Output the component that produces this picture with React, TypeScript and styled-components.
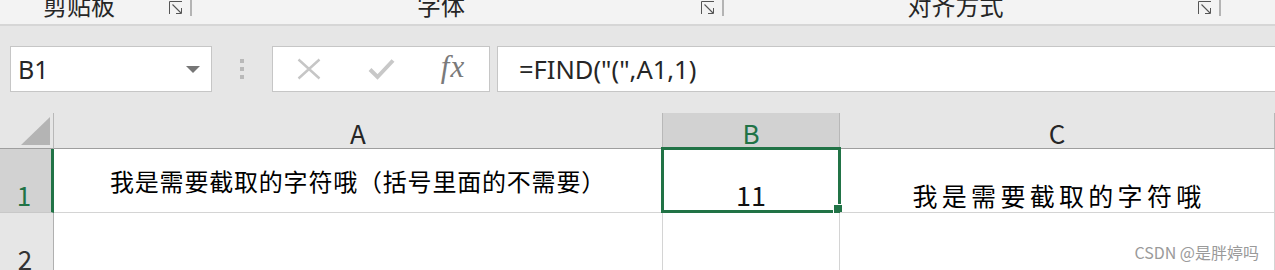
import React from "react";
import styled, { createGlobalStyle } from "styled-components";

const Global = createGlobalStyle`
  html, body { margin: 0; padding: 0; width: 1275px; height: 270px; overflow: hidden; background: #fff; }
  * { box-sizing: border-box; }
`;

const CJK = `"Noto Sans CJK SC", "Noto Sans", sans-serif`;
const UI = `"Noto Sans", "Open Sans", "Noto Sans CJK SC", sans-serif`;
const GREEN = "#217346";

const Page = styled.div`
  position: relative;
  width: 1275px;
  height: 270px;
  overflow: hidden;
  background: #e6e6e6;
`;

/* ---------- Ribbon group labels ---------- */
const Ribbon = styled.div`
  display: flex;
  height: 26px;
  background: #f3f3f3;
  border-bottom: 2px solid #d6d6d6;
  overflow: hidden;
`;

const Group = styled.div<{ $w: number }>`
  display: flex;
  align-items: flex-start;
  flex: none;
  width: ${(p) => p.$w}px;
`;

const GroupLabel = styled.div`
  flex: 1;
  padding-right: 11px;
  margin-top: -7px;
  text-align: center;
  font-family: ${CJK};
  font-size: 24px;
  line-height: 24px;
  color: #262626;
  white-space: nowrap;
`;

const Launcher = styled.svg`
  flex: none;
  width: 14px;
  height: 14px;
  margin-top: 1px;
`;

const GroupSep = styled.div`
  flex: none;
  width: 2px;
  height: 16px;
  margin-left: 7px;
  background: #b4b4b4;
`;

/* ---------- Formula bar ---------- */
const FormulaArea = styled.div`
  display: flex;
  align-items: stretch;
  height: 87px;
  padding: 20px 0 21px 10px;
`;

const NameBox = styled.div`
  display: flex;
  align-items: center;
  flex: none;
  width: 202px;
  padding: 0 11px 0 7px;
  background: #fff;
  border: 1px solid #c6c6c6;
  font-family: ${UI};
  font-size: 25px;
  color: #262626;
`;

const NameText = styled.span`
  flex: 1;
`;

const DropArrow = styled.div`
  width: 0;
  height: 0;
  border-left: 7px solid transparent;
  border-right: 7px solid transparent;
  border-top: 7px solid #767676;
`;

const Dots = styled.div`
  display: flex;
  flex-direction: column;
  justify-content: center;
  gap: 4px;
  flex: none;
  width: 4px;
  margin: 0 28px;
`;

const Dot = styled.div`
  width: 4px;
  height: 4px;
  background: #b9b9b9;
`;

const ButtonBox = styled.div`
  display: flex;
  flex: none;
  width: 218px;
  background: #fff;
  border: 1px solid #c6c6c6;
`;

const IconSlot = styled.div`
  display: flex;
  align-items: center;
  justify-content: center;
  width: 72px;
  flex: none;
`;

const Fx = styled.span`
  font-family: "Liberation Serif", "DejaVu Serif", serif;
  font-style: italic;
  font-size: 31px;
  color: #7a7a7a;
  margin-top: -4px;
  letter-spacing: 1px;
`;

const FormulaInput = styled.div`
  display: flex;
  align-items: center;
  flex: 1;
  margin-left: 7px;
  padding-left: 21px;
  background: #fff;
  border: 1px solid #c6c6c6;
  border-right: none;
  font-family: ${UI};
  font-size: 25.5px;
  color: #262626;
  white-space: nowrap;
`;

/* ---------- Sheet grid ---------- */
const Sheet = styled.div`
  display: grid;
  grid-template-columns: 54px 609px 177px 1fr;
  grid-template-rows: 36px 64px 64px;
  background: #fff;
`;

const Corner = styled.div`
  display: flex;
  justify-content: flex-end;
  align-items: flex-end;
  padding: 0 3px 3px 0;
  background: #e6e6e6;
  border-right: 1px solid #b8b8b8;
  border-bottom: 1px solid #9e9e9e;
`;

const CornerTriangle = styled.div`
  width: 29px;
  height: 28px;
  background: #b4b4b4;
  clip-path: polygon(100% 0, 100% 100%, 0 100%);
`;

const ColHead = styled.div<{ $sel?: boolean }>`
  display: flex;
  align-items: center;
  justify-content: center;
  padding-top: 3px;
  background: ${(p) => (p.$sel ? "#d2d2d2" : "#e6e6e6")};
  border-right: 1px solid #b8b8b8;
  border-bottom: 1px solid ${(p) => (p.$sel ? GREEN : "#9e9e9e")};
  font-family: ${CJK};
  font-size: 26px;
  color: ${(p) => (p.$sel ? GREEN : "#262626")};
`;

const RowHead = styled.div<{ $sel?: boolean }>`
  display: flex;
  align-items: flex-end;
  justify-content: center;
  padding: 0 3px 0 0;
  background: ${(p) => (p.$sel ? "#d2d2d2" : "#e6e6e6")};
  border-right: ${(p) => (p.$sel ? `3px solid ${GREEN}` : "1px solid #b0b0b0")};
  border-bottom: 1px solid #c8c8c8;
  font-family: ${CJK};
  font-size: 26px;
  line-height: 34px;
  color: ${(p) => (p.$sel ? GREEN : "#333")};
`;

const Cell = styled.div<{ $align?: "center" | "end" }>`
  position: relative;
  display: flex;
  justify-content: center;
  align-items: ${(p) => (p.$align === "center" ? "center" : "flex-end")};
  border-right: 1px solid #d4d4d4;
  border-bottom: 1px solid #d4d4d4;
  font-family: ${CJK};
  color: #000;
  white-space: nowrap;
`;

const LongText = styled.span`
  font-size: 24px;
  letter-spacing: 0.8px;
  line-height: 30px;
`;

const NumText = styled.span`
  font-size: 27px;
  line-height: 34px;
  color: #111;
`;

const ShortText = styled.span`
  font-size: 25px;
  letter-spacing: 4.3px;
  line-height: 33px;
  margin-left: 4px;
`;

const Selection = styled.div`
  position: absolute;
  top: -2px;
  left: -2px;
  right: -2px;
  bottom: -1px;
  border: 3px solid ${GREEN};
  pointer-events: none;
`;

const FillHandle = styled.div`
  position: absolute;
  right: -4px;
  bottom: -2px;
  width: 10px;
  height: 10px;
  background: ${GREEN};
  border: 1px solid #fff;
`;

const Watermark = styled.div`
  position: absolute;
  right: 16px;
  bottom: 6px;
  font-family: ${CJK};
  font-size: 16px;
  color: #9a9a9a;
`;

const LauncherIcon = () => (
  <Launcher viewBox="0 0 14 14">
    <path d="M0.5 13V0.5H13" fill="none" stroke="#555" strokeWidth="1" />
    <path d="M3.5 3.5L12 12" fill="none" stroke="#555" strokeWidth="1.1" />
    <path d="M7 12.5H12.5V7" fill="none" stroke="#555" strokeWidth="1" />
  </Launcher>
);

const groups = [
  { label: "剪贴板", w: 192 },
  { label: "字体", w: 532 },
  { label: "对齐方式", w: 497 },
];

export default function App() {
  return (
    <Page>
      <Global />
      <Ribbon>
        {groups.map((g) => (
          <Group key={g.label} $w={g.w}>
            <GroupLabel>{g.label}</GroupLabel>
            <LauncherIcon />
            <GroupSep />
          </Group>
        ))}
      </Ribbon>

      <FormulaArea>
        <NameBox>
          <NameText>B1</NameText>
          <DropArrow />
        </NameBox>
        <Dots>
          <Dot />
          <Dot />
          <Dot />
        </Dots>
        <ButtonBox>
          <IconSlot>
            <svg width="24" height="22" viewBox="0 0 24 22">
              <path d="M1.5 1.5L22.5 20.5M22.5 1.5L1.5 20.5" stroke="#c6c6c6" strokeWidth="2.4" fill="none" />
            </svg>
          </IconSlot>
          <IconSlot>
            <svg width="27" height="22" viewBox="0 0 27 22">
              <path d="M2 11.5L9.5 19L25 2.5" stroke="#c8c8c8" strokeWidth="4" fill="none" />
            </svg>
          </IconSlot>
          <IconSlot>
            <Fx>fx</Fx>
          </IconSlot>
        </ButtonBox>
        <FormulaInput>=FIND("(",A1,1)</FormulaInput>
      </FormulaArea>

      <Sheet>
        <Corner>
          <CornerTriangle />
        </Corner>
        <ColHead>A</ColHead>
        <ColHead $sel>B</ColHead>
        <ColHead>C</ColHead>

        <RowHead $sel>1</RowHead>
        <Cell $align="center">
          <LongText>我是需要截取的字符哦（括号里面的不需要）</LongText>
        </Cell>
        <Cell>
          <NumText>11</NumText>
          <Selection />
          <FillHandle />
        </Cell>
        <Cell>
          <ShortText>我是需要截取的字符哦</ShortText>
        </Cell>

        <RowHead>2</RowHead>
        <Cell />
        <Cell />
        <Cell />
      </Sheet>
      <Watermark>CSDN @是胖婷吗</Watermark>
    </Page>
  );
}
